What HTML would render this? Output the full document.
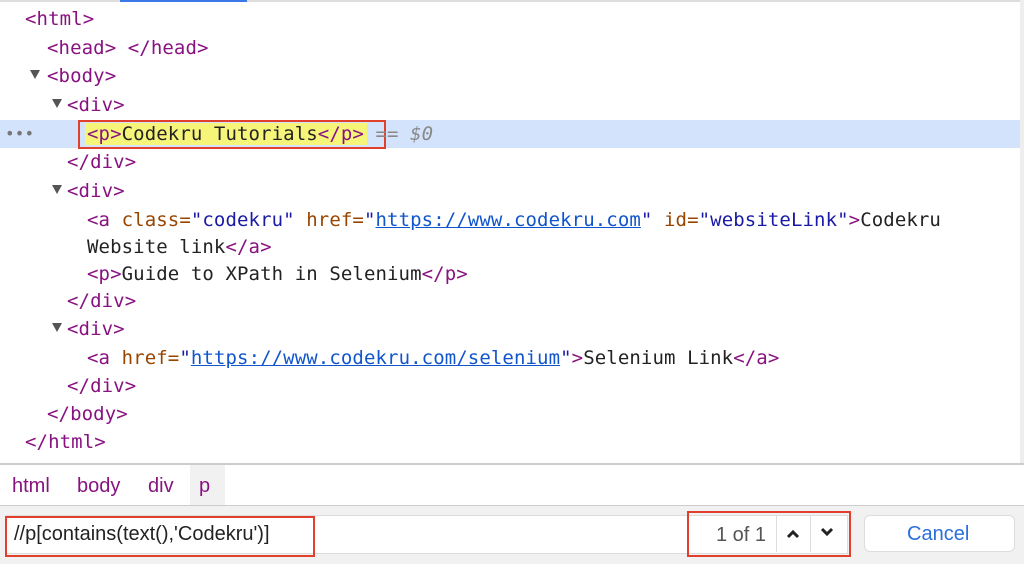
<!DOCTYPE html>
<html><head><style>
body{margin:0;width:1024px;height:563px;background:#fff;position:relative;overflow:hidden;font-family:"DejaVu Sans Mono",monospace;}
.l{position:absolute;font-size:19px;line-height:28px;white-space:pre;color:#222;letter-spacing:0.1px}
.t{color:#881280}.n{color:#994500}.v{color:#1a1aa6}.u{color:#1155cc;text-decoration:underline}
.tri{position:absolute;width:0;height:0;border-left:5px solid transparent;border-right:5px solid transparent;border-top:9px solid #555;}
.s{font-family:"Liberation Sans",Arial,sans-serif;position:absolute;}
</style></head><body>
<div style="position:absolute;left:0;top:0;width:1024px;height:2px;background:#ddd"></div>
<div style="position:absolute;left:120px;top:0;width:127px;height:2px;background:#3b78e7"></div>
<div style="position:absolute;left:1020px;top:0;width:4px;height:463px;background:#eee"></div>

<div style="position:absolute;left:0;top:120px;width:1020px;height:28px;background:#d3e3fb"></div>
<div style="position:absolute;left:85px;top:123px;width:282px;height:22px;background:#f6f57a"></div>
<div style="position:absolute;left:78px;top:120px;width:304px;height:25px;border:2px solid #e0402c"></div>
<div class="l" style="left:5px;top:120px;color:#777;font-size:16px">•••</div>

<div class="l t" style="left:25px;top:5px">&lt;html&gt;</div>
<div class="l t" style="left:47px;top:34px">&lt;head&gt; &lt;/head&gt;</div>
<div class="tri" style="left:30px;top:70px"></div>
<div class="l t" style="left:47px;top:62px">&lt;body&gt;</div>
<div class="tri" style="left:52px;top:99px"></div>
<div class="l t" style="left:67px;top:91px">&lt;div&gt;</div>
<div class="l" style="left:87px;top:120px"><span class="t">&lt;p&gt;</span>Codekru Tutorials<span class="t">&lt;/p&gt;</span> <span style="color:#888">== <i>$0</i></span></div>
<div class="l t" style="left:67px;top:148px">&lt;/div&gt;</div>
<div class="tri" style="left:52px;top:185px"></div>
<div class="l t" style="left:67px;top:177px">&lt;div&gt;</div>
<div class="l" style="left:87px;top:206px"><span class="t">&lt;a </span><span class="n">class=</span><span class="v">"codekru"</span> <span class="n">href=</span><span class="v">"</span><span class="u">https://www.codekru.com</span><span class="v">"</span> <span class="n">id=</span><span class="v">"websiteLink"</span><span class="t">&gt;</span>Codekru</div>
<div class="l" style="left:87px;top:233px">Website link<span class="t">&lt;/a&gt;</span></div>
<div class="l" style="left:87px;top:260px"><span class="t">&lt;p&gt;</span>Guide to XPath in Selenium<span class="t">&lt;/p&gt;</span></div>
<div class="l t" style="left:67px;top:287px">&lt;/div&gt;</div>
<div class="tri" style="left:52px;top:323px"></div>
<div class="l t" style="left:67px;top:315px">&lt;div&gt;</div>
<div class="l" style="left:87px;top:344px"><span class="t">&lt;a </span><span class="n">href=</span><span class="v">"</span><span class="u">https://www.codekru.com/selenium</span><span class="v">"</span><span class="t">&gt;</span>Selenium Link<span class="t">&lt;/a&gt;</span></div>
<div class="l t" style="left:67px;top:372px">&lt;/div&gt;</div>
<div class="l t" style="left:47px;top:400px">&lt;/body&gt;</div>
<div class="l t" style="left:25px;top:428px">&lt;/html&gt;</div>

<div style="position:absolute;left:0;top:463px;width:1024px;height:2px;background:#ccc"></div>
<div style="position:absolute;left:190px;top:465px;width:35px;height:40px;background:#f1f1f1"></div>
<div class="s" style="left:12px;top:475px;font-size:20px;color:#881280">html</div>
<div class="s" style="left:77px;top:475px;font-size:20px;color:#881280">body</div>
<div class="s" style="left:148px;top:475px;font-size:20px;color:#881280">div</div>
<div class="s" style="left:199px;top:475px;font-size:20px;color:#881280">p</div>
<div style="position:absolute;left:0;top:505px;width:1024px;height:58px;background:#f1f1f1;border-top:1px solid #ccc"></div>
<div style="position:absolute;left:6px;top:515px;width:840px;height:37px;background:#fff;border:1px solid #ddd"></div>
<div class="s" style="left:14px;top:523px;font-size:20px;color:#222">//p[contains(text(),'Codekru')]</div>
<div style="position:absolute;left:5px;top:516px;width:306px;height:37px;border:2px solid #e0402c"></div>
<div style="position:absolute;left:776px;top:516px;width:1px;height:36px;background:#ddd"></div>
<div style="position:absolute;left:810px;top:516px;width:1px;height:36px;background:#ddd"></div>
<div class="s" style="left:716px;top:524px;font-size:20px;color:#555">1 of 1</div>
<svg style="position:absolute;left:785px;top:528px" width="16" height="12"><path d="M3 9 L8 4 L13 9" stroke="#222" stroke-width="3" fill="none"/></svg>
<svg style="position:absolute;left:819px;top:526px" width="16" height="12"><path d="M3 3 L8 8 L13 3" stroke="#222" stroke-width="3" fill="none"/></svg>
<div style="position:absolute;left:687px;top:511px;width:160px;height:42px;border:2px solid #e0402c"></div>
<div style="position:absolute;left:864px;top:515px;width:149px;height:35px;background:#fff;border:1px solid #ddd;border-radius:6px"></div>
<div class="s" style="left:907px;top:523px;font-size:20px;color:#2a6fdb">Cancel</div>
</body></html>
